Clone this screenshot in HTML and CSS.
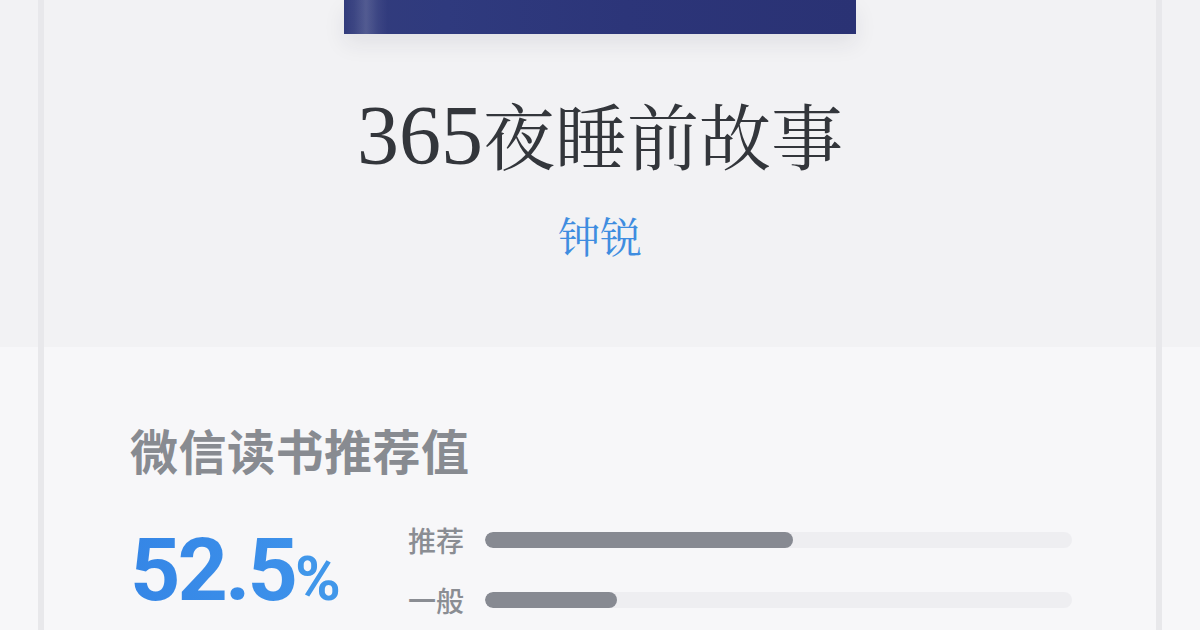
FILE: index.html
```html
<!DOCTYPE html>
<html lang="zh-CN">
<head>
<meta charset="utf-8">
<title>365夜睡前故事 - 钟锐</title>
<link rel="stylesheet" href="styles.css">
</head>
<body>
  <section class="band band-top">
    <div class="col col-top">
      <div class="cover"></div>
      <h1 class="title"><span class="title-num">365</span>夜睡前故事</h1>
      <p class="author">钟锐</p>
    </div>
  </section>
  <section class="band band-bottom">
    <div class="col col-bottom">
      <h2 class="rating-head">微信读书推荐值</h2>
      <div class="stats">
        <div class="score"><span class="score-num">52.5</span><span class="score-pct">%</span></div>
        <div class="bars">
          <div class="bar-row">
            <span class="bar-label">推荐</span>
            <div class="track"><div class="fill" style="width: 52.5%"></div></div>
          </div>
          <div class="bar-row">
            <span class="bar-label">一般</span>
            <div class="track"><div class="fill" style="width: 22.5%"></div></div>
          </div>
        </div>
      </div>
    </div>
  </section>
</body>
</html>
```

FILE: styles.css
```css
* { box-sizing: border-box; }

html, body {
  margin: 0;
  padding: 0;
  width: 1200px;
  height: 630px;
  overflow: hidden;
  font-family: "Noto Sans CJK SC", "Noto Sans", sans-serif;
}

.band { width: 100%; }
.band-top { background: #f2f2f4; }
.band-bottom { background: #f7f7f9; height: 283px; }

.col {
  margin: 0 38px;
  border-left: 6px solid #e8e8eb;
  border-right: 6px solid #e8e8eb;
}

.col-top {
  height: 347px;
  display: flex;
  flex-direction: column;
  align-items: center;
}

.cover {
  width: 512px;
  height: 34px;
  flex: none;
  background:
    linear-gradient(90deg,
      rgba(255,255,255,0) 0px,
      rgba(255,255,255,0.05) 10px,
      rgba(255,255,255,0.16) 22px,
      rgba(255,255,255,0.05) 34px,
      rgba(255,255,255,0) 44px),
    linear-gradient(90deg, #323c7c 0%, #2f3a7e 20%, #2c3579 55%, #2a3274 100%);
  box-shadow: 0 10px 22px rgba(40, 40, 70, 0.08);
}

.title {
  margin: 62px 0 0;
  font-family: "Liberation Serif", "Noto Serif CJK SC", "Noto Sans CJK SC", serif;
  font-weight: 400;
  font-size: 72px;
  line-height: 80px;
  color: #33363b;
  white-space: nowrap;
}

.title-num { font-size: 84px; }

.author {
  margin: 30px 0 0;
  font-family: "Noto Serif CJK SC", "Noto Sans CJK SC", serif;
  font-size: 42px;
  line-height: 50px;
  color: #3f8de0;
}

.col-bottom {
  height: 283px;
  padding: 78px 84px 0 86px;
}

.rating-head {
  margin: 0;
  font-size: 48px;
  line-height: 48px;
  font-weight: 700;
  color: #888b91;
  letter-spacing: 0.5px;
}

.stats {
  display: flex;
  margin-top: 37px;
}

.score {
  width: 278px;
  flex: none;
  display: flex;
  align-items: baseline;
  align-self: center;
  color: #3a8ee8;
  font-family: Roboto, "Liberation Sans", sans-serif;
  font-weight: 700;
}

.score-num {
  font-size: 88px;
  line-height: 88px;
  letter-spacing: -3px;
  background: linear-gradient(90deg, #3586e6, #3d91ea);
  -webkit-background-clip: text;
  background-clip: text;
  color: transparent;
}

.score-pct {
  font-size: 62px;
  margin-left: 0;
  color: #4197ea;
}

.bars {
  flex: 1;
  display: flex;
  flex-direction: column;
}

.bar-row {
  height: 60px;
  display: flex;
  align-items: center;
  gap: 21px;
}

.bar-label {
  width: 56px;
  flex: none;
  font-size: 28px;
  line-height: 32px;
  font-weight: 500;
  color: #8a8d93;
}

.track {
  flex: 1;
  height: 16px;
  border-radius: 8px;
  background: #eeeef1;
  overflow: hidden;
}

.fill {
  height: 100%;
  border-radius: 8px;
  background: #878a92;
}
```
